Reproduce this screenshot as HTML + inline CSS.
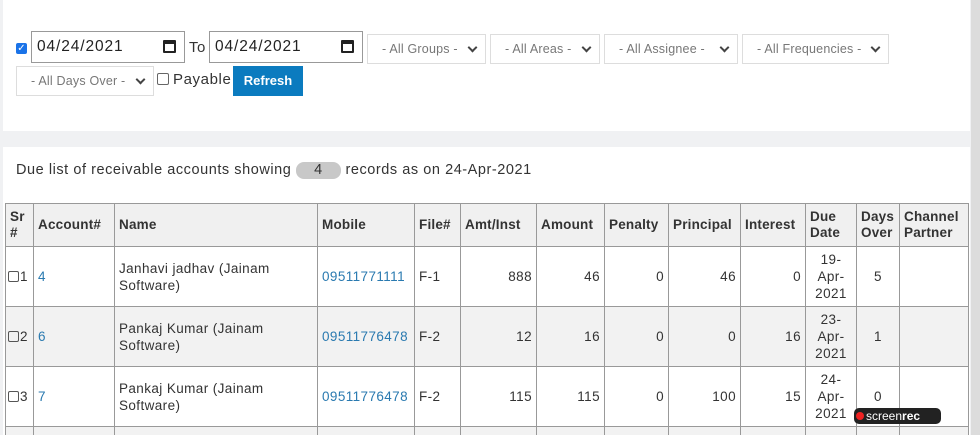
<!DOCTYPE html>
<html style="height:435px;overflow:hidden"><head><style>
html,body{margin:0;width:980px;height:435px;overflow:hidden}
body{background:#f0f1f3;font-family:"Liberation Sans",sans-serif;color:#333;position:relative}
.p1{position:absolute;left:3px;top:0;width:967px;height:131px;background:#fff}
.p2{position:absolute;left:3px;top:147px;width:967px;height:288px;background:#fff}
.sb{position:absolute;left:971px;top:0;width:9px;height:435px;background:#dcdcdc}
.a{position:absolute}
.date{position:absolute;height:32px;border:1px solid #999;background:#fff;box-sizing:border-box;font-size:15.5px;letter-spacing:0.9px;line-height:30px;padding-left:5px;color:#222}
.cal{position:absolute;right:8px;top:8px;width:13px;height:13px;border:2px solid #222;border-top-width:4px;box-sizing:border-box;border-radius:1px}
.sel{position:absolute;height:30px;border:1px solid #ddd;box-sizing:border-box;font-size:12.5px;letter-spacing:0.2px;line-height:28px;color:#777;padding-left:14px}
.sel:after{content:"";position:absolute;right:9px;top:9px;width:5px;height:5px;border-right:2px solid #444;border-bottom:2px solid #444;transform:rotate(45deg)}
table{position:absolute;left:5px;top:203px;border-collapse:collapse;font-size:13.5px;letter-spacing:0.4px;table-layout:fixed}
td,th{border:1px solid #999;padding:0 4px;box-sizing:border-box;overflow:hidden;white-space:normal}
th{background:#f0f0f0;text-align:left;font-weight:bold;line-height:16px;height:43px;color:#333;letter-spacing:0.2px}
td{height:60px;line-height:17px}
tr.g td{background:#f2f2f2}
.r{text-align:right}.c{text-align:center}
.l{color:#2a7ab0}
.cb{display:inline-block;width:9px;height:9px;border:1px solid #555;border-radius:2px;vertical-align:-1px;margin-right:1px}
</style></head><body>
<div class="p1"></div><div class="p2"></div><div class="sb"></div>
<div class="a" style="left:16px;top:43px;width:11px;height:11px;background:#1a73e8;border-radius:2px;color:#fff;font-size:10px;line-height:11px;text-align:center">✓</div>
<div class="date" style="left:31px;top:31px;width:154px">04/24/2021<span class="cal"></span></div>
<div class="a" style="left:189px;top:39px;font-size:15px;letter-spacing:0.5px">To</div>
<div class="date" style="left:209px;top:31px;width:154px">04/24/2021<span class="cal"></span></div>
<div class="sel" style="left:367px;top:34px;width:119px">- All Groups -</div>
<div class="sel" style="left:490px;top:34px;width:110px">- All Areas -</div>
<div class="sel" style="left:604px;top:34px;width:134px">- All Assignee -</div>
<div class="sel" style="left:742px;top:34px;width:147px">- All Frequencies -</div>
<div class="sel" style="left:16px;top:66px;width:138px">- All Days Over -</div>
<div class="a" style="left:157px;top:73px;width:10px;height:10px;border:1px solid #666;border-radius:2px"></div>
<div class="a" style="left:173px;top:71px;font-size:15px;letter-spacing:0.6px">Payable</div>
<div class="a" style="left:233px;top:66px;width:70px;height:30px;background:#0b7bbf;color:#fff;font-size:13px;font-weight:bold;line-height:30px;text-align:center">Refresh</div>
<div class="a" style="left:16px;top:162px;font-size:14.5px;letter-spacing:0.55px;white-space:nowrap">Due list of receivable accounts showing <span style="display:inline-block;width:45px;height:17px;background:#c8c8c8;border-radius:8px;text-align:center;line-height:17px">4</span> records as on 24-Apr-2021</div>
<table>
<colgroup><col style="width:28px"><col style="width:81px"><col style="width:203px"><col style="width:97px"><col style="width:46px"><col style="width:76px"><col style="width:68px"><col style="width:64px"><col style="width:72px"><col style="width:65px"><col style="width:51px"><col style="width:43px"><col style="width:69px"></colgroup>
<tr><th>Sr #</th><th>Account#</th><th>Name</th><th>Mobile</th><th>File#</th><th>Amt/Inst</th><th>Amount</th><th>Penalty</th><th>Principal</th><th>Interest</th><th>Due Date</th><th>Days Over</th><th>Channel Partner</th></tr>
<tr><td style="padding:0 2px"><span class="cb"></span>1</td><td class="l">4</td><td>Janhavi jadhav (Jainam Software)</td><td class="l">09511771111</td><td>F-1</td><td class="r">888</td><td class="r">46</td><td class="r">0</td><td class="r">46</td><td class="r">0</td><td class="c">19-<br>Apr-<br>2021</td><td class="c">5</td><td></td></tr>
<tr class="g"><td style="padding:0 2px"><span class="cb"></span>2</td><td class="l">6</td><td>Pankaj Kumar (Jainam Software)</td><td class="l">09511776478</td><td>F-2</td><td class="r">12</td><td class="r">16</td><td class="r">0</td><td class="r">0</td><td class="r">16</td><td class="c">23-<br>Apr-<br>2021</td><td class="c">1</td><td></td></tr>
<tr><td style="padding:0 2px"><span class="cb"></span>3</td><td class="l">7</td><td>Pankaj Kumar (Jainam Software)</td><td class="l">09511776478</td><td>F-2</td><td class="r">115</td><td class="r">115</td><td class="r">0</td><td class="r">100</td><td class="r">15</td><td class="c">24-<br>Apr-<br>2021</td><td class="c">0</td><td></td></tr>
<tr class="g"><td style="height:8px;line-height:0;font-size:0"></td><td></td><td></td><td></td><td></td><td></td><td></td><td></td><td></td><td></td><td></td><td></td><td></td></tr>
</table>
<div class="a" style="left:854px;top:408px;width:87px;height:16px;background:#222;border-radius:5px;color:#fff;font-size:12px;line-height:16px;padding-left:12px;box-sizing:border-box">screen<b>rec</b></div>
<div class="a" style="left:856px;top:412px;width:8px;height:8px;background:#e22;border-radius:50%"></div>
</body></html>
